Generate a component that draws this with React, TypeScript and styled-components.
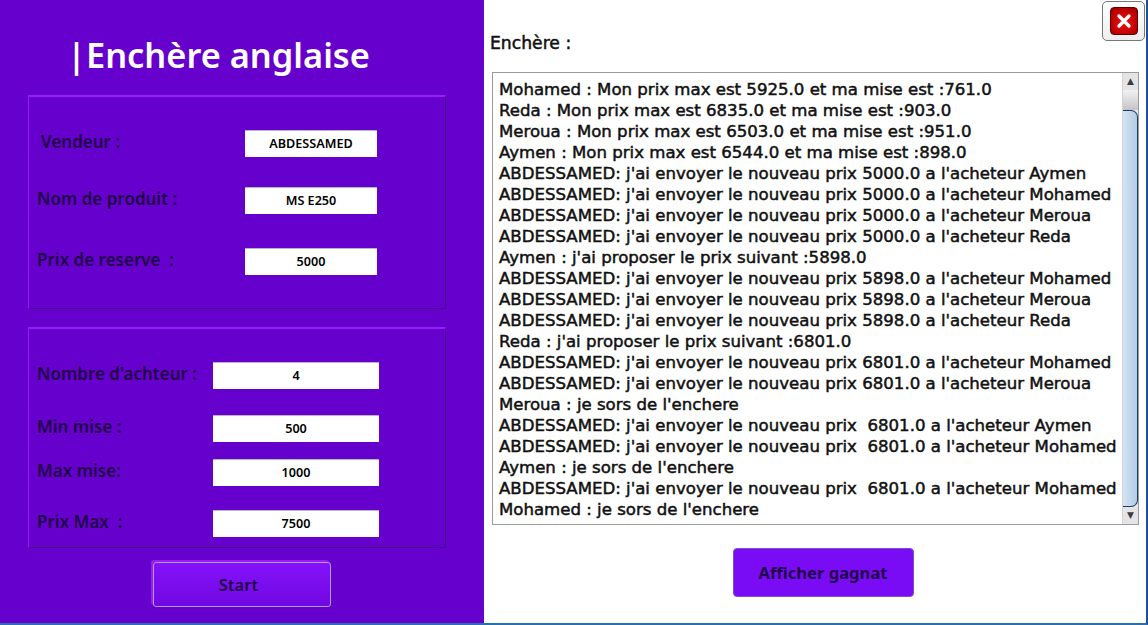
import React from 'react';
import styled, { createGlobalStyle } from 'styled-components';

const GlobalStyle = createGlobalStyle`
  html, body {
    margin: 0;
    padding: 0;
    background: #fff;
  }
  body {
    font-family: 'Noto Sans', 'Open Sans', sans-serif;
  }
`;

const Window = styled.div`
  box-sizing: border-box;
  width: 1148px;
  height: 625px;
  overflow: hidden;
  display: grid;
  grid-template-columns: 484px 1fr;
  border-bottom: 2px solid #2a70b0;
  border-right: 2px solid #1f4f8f;
`;

const Sidebar = styled.div`
  background: #6600cc;
  padding: 0 38px 0 28px;
  display: flex;
  flex-direction: column;
`;

const Title = styled.h1`
  margin: 33px 0 0 39px;
  height: 62px;
  color: #fff;
  font-size: 34.4px;
  line-height: 44px;
  font-weight: 600;
  white-space: nowrap;
`;

const Group = styled.div<{ $height: number; $top: number }>`
  box-sizing: border-box;
  height: ${(p) => p.$height}px;
  margin-top: ${(p) => p.$top}px;
  padding-left: 8px;
  border: 1px solid #4a0a8c;
  border-top: 2px solid #9a1cf8;
  border-left: 1px solid #9a1cf8;
  display: flex;
  flex-direction: column;
`;

const Row = styled.div<{ $top: number; $labelWidth: number }>`
  display: grid;
  grid-template-columns: ${(p) => p.$labelWidth}px auto;
  justify-content: start;
  align-items: center;
  margin-top: ${(p) => p.$top}px;
`;

const Label = styled.label<{ $indent?: number }>`
  margin-bottom: 4px;
  padding-left: ${(p) => p.$indent || 0}px;
  color: #1f0048;
  font-size: 17px;
  font-weight: 600;
  white-space: pre;
`;

const Field = styled.div<{ $width: number }>`
  box-sizing: border-box;
  width: ${(p) => p.$width}px;
  height: 27px;
  background: #fff;
  border-top: 1px solid #b9b3c4;
  color: #000;
  font-size: 12.6px;
  font-weight: 600;
  line-height: 26px;
  text-align: center;
`;

const StartButton = styled.button`
  align-self: flex-start;
  box-sizing: border-box;
  width: 178px;
  height: 45px;
  margin: 14px 0 0 125px;
  padding: 0 7px 0 0;
  background: linear-gradient(#8412fa, #7008e0);
  border: 1px solid #b39ae8;
  box-shadow: -2px -2px 0 #9a1cf0;
  border-radius: 3px;
  color: #1f0048;
  font-family: inherit;
  font-size: 16.6px;
  font-weight: 600;
`;

const Content = styled.div`
  background: #fff;
  padding: 1px 0 0 6px;
  display: flex;
  flex-direction: column;
`;

const TopBar = styled.div`
  height: 71px;
  display: flex;
  justify-content: space-between;
  align-items: flex-start;
`;

const Heading = styled.div`
  margin-top: 30px;
  color: #111;
  font-family: 'DejaVu Sans', sans-serif;
  font-size: 17.2px;
  line-height: 24px;
  -webkit-text-stroke: 0.5px #111;
`;

const CloseButton = styled.button`
  box-sizing: border-box;
  width: 43px;
  height: 40px;
  margin-right: 1px;
  padding: 0;
  background: linear-gradient(#fff, #eee);
  border: 1px solid #777;
  border-radius: 5px;
  display: flex;
  align-items: center;
  justify-content: center;
`;

const CloseIcon = styled.span`
  width: 28px;
  height: 28px;
  border-radius: 4px;
  background: radial-gradient(circle at 50% 55%, #f01010, #b80000 75%, #8a0000);
  border: 1px solid #5c0000;
  box-sizing: border-box;
  display: flex;
  align-items: center;
  justify-content: center;
`;

const LogBox = styled.div`
  box-sizing: border-box;
  width: 647px;
  height: 453px;
  margin-left: 2px;
  border: 1px solid #9a9a9a;
  display: flex;
`;

const LogText = styled.div`
  flex: 1;
  min-width: 0;
  padding: 6px 0 0 6px;
  color: #111;
  font-family: 'DejaVu Sans', sans-serif;
  font-size: 16.58px;
  line-height: 21px;
  white-space: pre;
  overflow: hidden;
  -webkit-text-stroke: 0.5px #111;
`;

const Scrollbar = styled.div`
  width: 15px;
  background: #e9e9ea;
  border-left: 1px solid #d2d2d2;
  display: flex;
  flex-direction: column;
`;

const ArrowCell = styled.div`
  height: 17px;
  background: #e4e4e6;
  color: #3c3c3c;
  font-family: 'DejaVu Sans', sans-serif;
  font-size: 9px;
  line-height: 17px;
  text-align: center;
`;

const TrackGap = styled.div`
  height: 20px;
  background: linear-gradient(#f2f2f2, #c4c4c6);
`;

const Thumb = styled.div`
  flex: 1;
  background: linear-gradient(90deg, #d3e3f2, #b3cde6);
  border: 1px solid #1f3d63;
  border-left: none;
  border-radius: 0 7px 7px 0;
`;

const WinnerButton = styled.button`
  align-self: center;
  box-sizing: border-box;
  width: 181px;
  height: 49px;
  margin: 23px 0 0 10px;
  background: #7a0cf5;
  border: 1px solid #7e4fc0;
  border-radius: 4px;
  color: #1f0048;
  font-family: inherit;
  font-size: 16.6px;
  font-weight: 700;
`;

const sellerFields = [
  { label: 'Vendeur :', value: 'ABDESSAMED', top: 33, indent: 4 },
  { label: 'Nom de produit :', value: 'MS E250', top: 30 },
  { label: 'Prix de reserve  :', value: '5000', top: 34 },
];

const buyerFields = [
  { label: "Nombre d'achteur :", value: '4', top: 33 },
  { label: 'Min mise :', value: '500', top: 26 },
  { label: 'Max mise:', value: '1000', top: 17 },
  { label: 'Prix Max  :', value: '7500', top: 24 },
];

const logLines = [
  'Mohamed : Mon prix max est 5925.0 et ma mise est :761.0',
  'Reda : Mon prix max est 6835.0 et ma mise est :903.0',
  'Meroua : Mon prix max est 6503.0 et ma mise est :951.0',
  'Aymen : Mon prix max est 6544.0 et ma mise est :898.0',
  "ABDESSAMED: j'ai envoyer le nouveau prix 5000.0 a l'acheteur Aymen",
  "ABDESSAMED: j'ai envoyer le nouveau prix 5000.0 a l'acheteur Mohamed",
  "ABDESSAMED: j'ai envoyer le nouveau prix 5000.0 a l'acheteur Meroua",
  "ABDESSAMED: j'ai envoyer le nouveau prix 5000.0 a l'acheteur Reda",
  "Aymen : j'ai proposer le prix suivant :5898.0",
  "ABDESSAMED: j'ai envoyer le nouveau prix 5898.0 a l'acheteur Mohamed",
  "ABDESSAMED: j'ai envoyer le nouveau prix 5898.0 a l'acheteur Meroua",
  "ABDESSAMED: j'ai envoyer le nouveau prix 5898.0 a l'acheteur Reda",
  "Reda : j'ai proposer le prix suivant :6801.0",
  "ABDESSAMED: j'ai envoyer le nouveau prix 6801.0 a l'acheteur Mohamed",
  "ABDESSAMED: j'ai envoyer le nouveau prix 6801.0 a l'acheteur Meroua",
  "Meroua : je sors de l'enchere",
  "ABDESSAMED: j'ai envoyer le nouveau prix  6801.0 a l'acheteur Aymen",
  "ABDESSAMED: j'ai envoyer le nouveau prix  6801.0 a l'acheteur Mohamed",
  "Aymen : je sors de l'enchere",
  "ABDESSAMED: j'ai envoyer le nouveau prix  6801.0 a l'acheteur Mohamed",
  "Mohamed : je sors de l'enchere",
];

const App = () => (
  <>
    <GlobalStyle />
    <Window>
      <Sidebar>
        <Title>|Enchère anglaise</Title>
        <Group $height={214} $top={0}>
          {sellerFields.map((field) => (
            <Row key={field.label} $top={field.top} $labelWidth={208}>
              <Label $indent={field.indent}>{field.label}</Label>
              <Field $width={132}>{field.value}</Field>
            </Row>
          ))}
        </Group>
        <Group $height={221} $top={18}>
          {buyerFields.map((field) => (
            <Row key={field.label} $top={field.top} $labelWidth={176}>
              <Label>{field.label}</Label>
              <Field $width={166}>{field.value}</Field>
            </Row>
          ))}
        </Group>
        <StartButton>Start</StartButton>
      </Sidebar>
      <Content>
        <TopBar>
          <Heading>Enchère :</Heading>
          <CloseButton aria-label="Fermer">
            <CloseIcon>
              <svg width="16" height="16" viewBox="0 0 16 16">
                <path d="M3 3 L13 13 M13 3 L3 13" stroke="#fff" strokeWidth="3.4" strokeLinecap="round" />
              </svg>
            </CloseIcon>
          </CloseButton>
        </TopBar>
        <LogBox>
          <LogText>{logLines.join('\n')}</LogText>
          <Scrollbar>
            <ArrowCell>▲</ArrowCell>
            <TrackGap />
            <Thumb />
            <ArrowCell>▼</ArrowCell>
          </Scrollbar>
        </LogBox>
        <WinnerButton>Afficher gagnat</WinnerButton>
      </Content>
    </Window>
  </>
);

export default App;
